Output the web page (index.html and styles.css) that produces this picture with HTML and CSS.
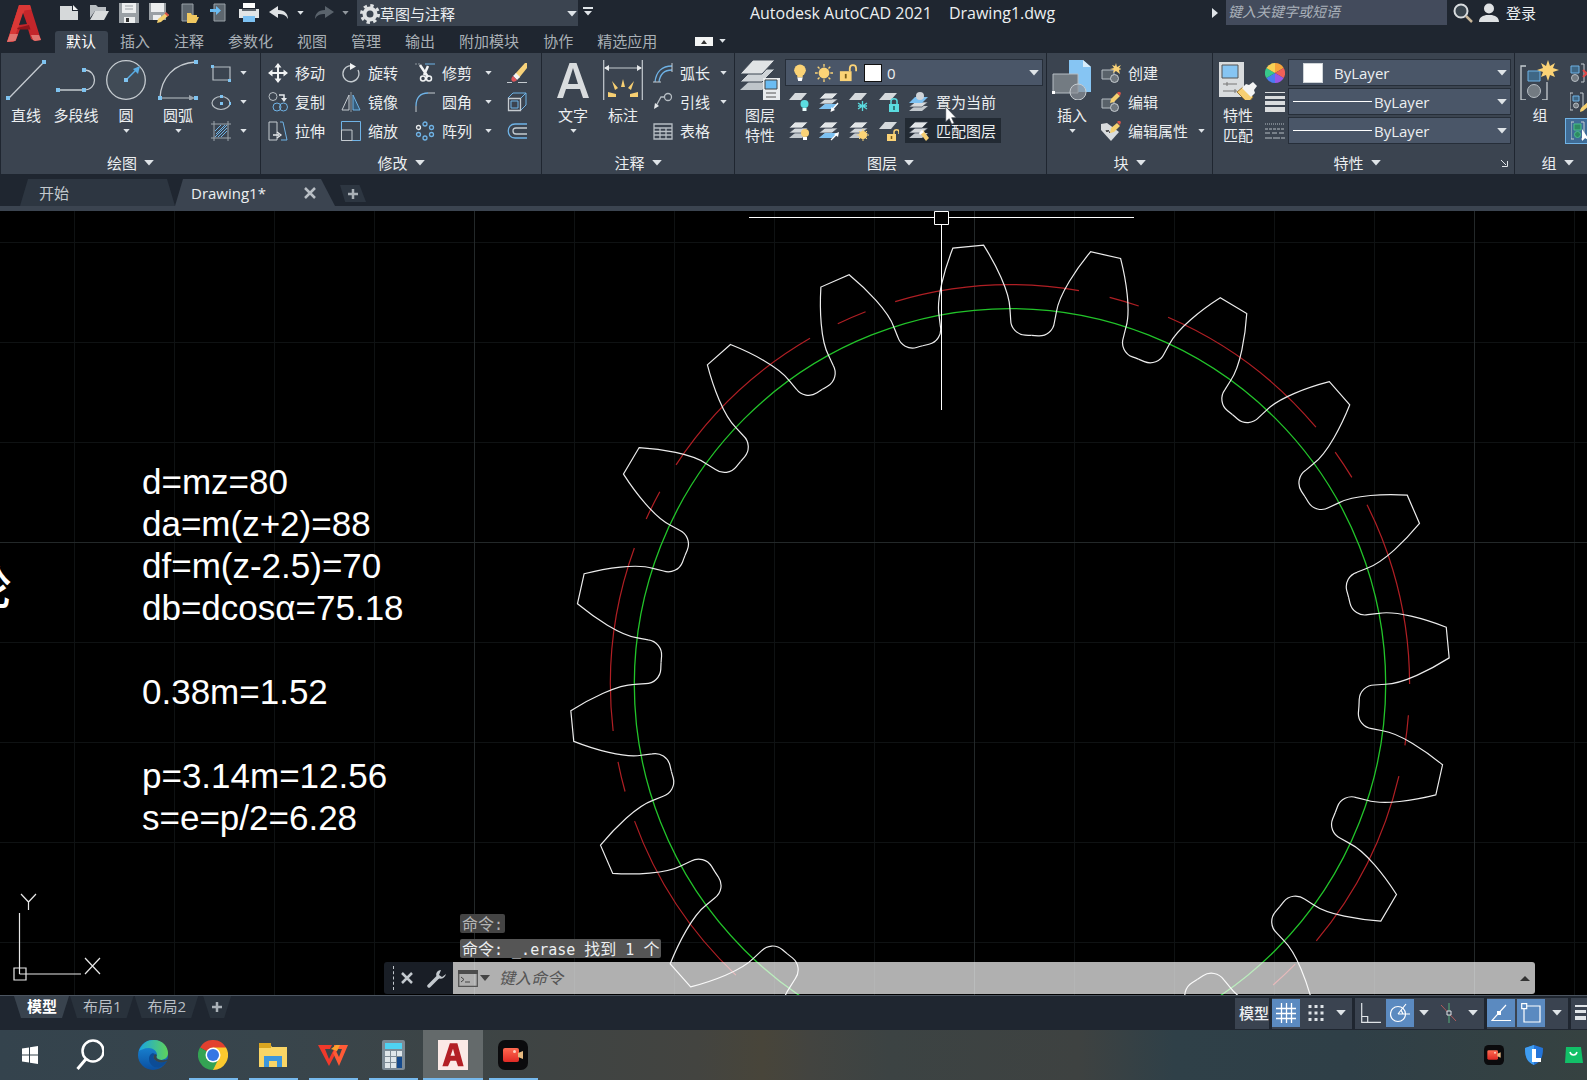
FILE: index.html
```html
<!DOCTYPE html>
<html lang="zh-CN">
<head>
<meta charset="utf-8">
<title>Autodesk AutoCAD 2021 - Drawing1.dwg</title>
<link rel="stylesheet" href="styles.css">
</head>
<body>
<svg class="symbols" width="0" height="0" aria-hidden="true">
  <defs>
    <linearGradient id="edge-a" x1="0" y1="0" x2="1" y2="0"><stop offset="0" stop-color="#1aa5e0"/><stop offset="1" stop-color="#5fd35a"/></linearGradient>
    <linearGradient id="edge-b" x1="0" y1="0" x2="0" y2="1"><stop offset="0" stop-color="#1b8fdd"/><stop offset="1" stop-color="#0b4fa0"/></linearGradient>
    <linearGradient id="rec" x1="0" y1="0" x2="0" y2="1"><stop offset="0" stop-color="#ff6a50"/><stop offset="1" stop-color="#e02a25"/></linearGradient>
    <symbol id="caret" viewBox="0 0 8 5"><path d="M0 0h8L4 4.6z" fill="#dfe4e8"/></symbol>
    <symbol id="logo" viewBox="0 0 34 38">
      <path d="M12 0h11l11 35-6 1-4-2-3-10h-8l-4 11-3 2H0z" fill="#c4262b"/>
      <path d="M12 0h11l1.500 4.500-7 1L9.500 27l-2 6L0 37z" fill="#d93836"/>
      <path d="M16 8l-4 12 8-1z" fill="#1f2630"/>
      <path d="M3 29h8l-2.500 7-8.500 1z" fill="#e0746f"/>
      <path d="M24 30l8 0 2 5-6 1-2-1z" fill="#e0746f"/>
      <path d="M10 23l12-3 1.500 4.500H11z" fill="#8f151b"/>
    </symbol>
    <symbol id="i-new" viewBox="0 0 20 20"><path d="M1 3h12v5h6v9H1z" fill="#d6d9da"/><path d="M14 2l5 5h-5z" fill="#f2f3f3"/></symbol>
    <symbol id="i-open" viewBox="0 0 20 20"><path d="M1 2h6l2 2h8v4H6L1 15z" fill="#b9bec2"/><path d="M6 8h14l-5 9H1z" fill="#d9dcdd"/></symbol>
    <symbol id="i-save" viewBox="0 0 20 20"><path d="M0 0h20v20H0z" fill="#9aa0a5"/><path d="M3 0h14v10H3zM5 14h11v6H5z" fill="#eceeef"/><path d="M6 3h8M6 6h8" stroke="#9aa0a5"/><path d="M7 15h3v4H7z" fill="#333"/></symbol>
    <symbol id="i-saveas" viewBox="0 0 20 20"><path d="M0 0h17v17H0z" fill="#9aa0a5"/><path d="M2 0h13v9H2zM4 12h8v5H4z" fill="#eceeef"/><path d="M8 20l1-4 8-6 3 2-8 7z" fill="#f5d06f"/><path d="M17 9l3 3-1.500 1.500-3-3z" fill="#d95448"/></symbol>
    <symbol id="i-webopen" viewBox="0 0 20 20"><path d="M3 1h11v17H3z" fill="#5d666e" stroke="#9aa1a7"/><path d="M8 10h4l1 2h5v2h2l-3 6H8z" fill="#f0c860"/></symbol>
    <symbol id="i-websave" viewBox="0 0 20 20"><path d="M5 1h11v17H5z" fill="#5d666e" stroke="#9aa1a7"/><path d="M1 6h6V3l5 4.500-5 4.500V9H1z" fill="#6bbcf2"/></symbol>
    <symbol id="i-print" viewBox="0 0 20 20"><path d="M4 0h12v5H4z" fill="#fff"/><path d="M0 6h20v9H0z" fill="#e2e5e6"/><path d="M4 13h12v6H4z" fill="#7cc1f2"/><path d="M3 7h14" stroke="#333b44" stroke-width="1.500"/></symbol>
    <symbol id="i-undo" viewBox="0 0 20 20"><path d="M0 9l9-6v4c7 0 10 4 10 9-2-4-5-5-10-5v4z" fill="#dfe2e4"/></symbol>
    <symbol id="i-redo" viewBox="0 0 20 20"><path d="M20 9l-9-6v4C4 7 1 11 1 16c2-4 5-5 10-5v4z" fill="#5a636c"/></symbol>
    <symbol id="i-gear" viewBox="0 0 20 20"><circle cx="10" cy="10" r="5.500" fill="none" stroke="#dfe2e4" stroke-width="4"/><circle cx="10" cy="10" r="8.500" fill="none" stroke="#dfe2e4" stroke-width="3" stroke-dasharray="3.340 3.340"/></symbol>
    <symbol id="i-search" viewBox="0 0 20 20"><circle cx="8" cy="8" r="6.500" fill="#39444d" stroke="#d7dbde" stroke-width="2"/><path d="M13 13l6 6" stroke="#c9b79a" stroke-width="2.500"/></symbol>
    <symbol id="i-user" viewBox="0 0 20 20"><circle cx="10" cy="5.500" r="5" fill="#dfe2e4"/><path d="M0 19c0-5 4-6 7-7h6c3 1 7 2 7 7z" fill="#dfe2e4"/></symbol>

    <symbol id="b-line" viewBox="0 0 40 40"><path d="M3 38L37 3" stroke="#c5cbd0" stroke-width="1.300"/><path d="M0 36h4v4H0zM36 0h4v4h-4z" fill="#7fc3f0"/></symbol>
    <symbol id="b-pline" viewBox="0 0 40 40"><path d="M2 30h26c14 0 14-20 0-20" fill="none" stroke="#c5cbd0" stroke-width="1.300"/><path d="M0 28h4v4H0zM26 28h4v4h-4zM26 8h4v4h-4z" fill="#7fc3f0"/></symbol>
    <symbol id="b-circle" viewBox="0 0 40 40"><circle cx="20" cy="20" r="19.300" fill="#414b56" stroke="#c5cbd0" stroke-width="1.300"/><path d="M20 20L32 8" stroke="#59aee6" stroke-width="1.500"/><path d="M34 6l-2 8-5-5z" fill="#59aee6"/><path d="M18 18h4v4h-4z" fill="#7fc3f0"/></symbol>
    <symbol id="b-arc" viewBox="0 0 40 40"><path d="M2 38C3 18 16 3 38 2" fill="none" stroke="#c5cbd0" stroke-width="1.300"/><path d="M2 38h32" stroke="#7b848c" stroke-width="2"/><path d="M31 35l6 3-6 3z" fill="#9aa2a9"/><path d="M0 36h4v4H0zM36 36h4v4h-4zM36 0h4v4h-4z" fill="#7fc3f0"/></symbol>
    <symbol id="s-rect" viewBox="0 0 20 20"><path d="M2 4h17v13H2z" fill="none" stroke="#b6bdc3" stroke-width="1.200"/><path d="M0 2h3v3H0zM17 16h3v3h-3z" fill="#7fc3f0"/></symbol>
    <symbol id="s-ellipse" viewBox="0 0 20 20"><ellipse cx="10" cy="11" rx="9" ry="6.500" fill="none" stroke="#b6bdc3" stroke-width="1.200"/><path d="M9 10h3v3H9zM9 3h3v3H9zM18 10h2v3h-2z" fill="#7fc3f0"/></symbol>
    <symbol id="s-hatch" viewBox="0 0 20 20"><path d="M3 0v20M17 0v20M0 3h20M0 17h20" stroke="#9ba3aa"/><path d="M4 10l6-6M4 16L16 4M10 16l6-6M5 13l9-9M7 16l9-9" stroke="#6fb3e6"/></symbol>
    <symbol id="s-move" viewBox="0 0 20 20"><path d="M10 1v18M1 10h18" stroke="#f1f3f4" stroke-width="2"/><path d="M10 0l3.500 4.500h-7zM10 20l3.500-4.500h-7zM0 10l4.500-3.500v7zM20 10l-4.500-3.500v7z" fill="#f1f3f4"/></symbol>
    <symbol id="s-copy" viewBox="0 0 20 20"><circle cx="5" cy="4.500" r="4" fill="none" stroke="#b6bdc3"/><path d="M11 3h5v4" fill="none" stroke="#e6e9eb" stroke-width="1.500"/><path d="M13 6h6l-3 4z" fill="#e6e9eb"/><circle cx="9" cy="15" r="4" fill="none" stroke="#6fb3e6"/><circle cx="15.500" cy="15" r="4" fill="none" stroke="#6fb3e6"/></symbol>
    <symbol id="s-stretch" viewBox="0 0 20 20"><path d="M1 1h8v18H1z" fill="none" stroke="#c5cbd0"/><path d="M12 1h3l4 18h-6" fill="none" stroke="#6fb3e6"/><path d="M5 14h6M9 11l4 3-4 3" fill="none" stroke="#e6e9eb" stroke-width="1.300"/></symbol>
    <symbol id="s-rotate" viewBox="0 0 20 20"><path d="M12 3A8 8 0 1 0 17 7" fill="none" stroke="#c5cbd0" stroke-width="1.300"/><path d="M9 0l6 3.500-6 3.500z" fill="#f1f3f4"/></symbol>
    <symbol id="s-mirror" viewBox="0 0 20 20"><path d="M8 3v15H1z" fill="none" stroke="#c5cbd0"/><path d="M12 3v15h7z" fill="#355a78" stroke="#6fb3e6"/><path d="M10 0v20" stroke="#8d959c"/></symbol>
    <symbol id="s-scale" viewBox="0 0 20 20"><path d="M.500 .500h19v19H.500z" fill="none" stroke="#6fb3e6"/><path d="M.500 9h10.500v10.500H.500z" fill="#3b4450" stroke="#c5cbd0"/></symbol>
    <symbol id="s-trim" viewBox="0 0 20 20"><path d="M0 1h6" stroke="#8d959c" stroke-dasharray="2 1"/><path d="M10 1h10" stroke="#6fb3e6"/><path d="M5 2l8 12M13 3L9 12" stroke="#f1f3f4" stroke-width="2.500"/><circle cx="8" cy="15.500" r="2.500" fill="none" stroke="#f1f3f4" stroke-width="1.500"/><circle cx="14" cy="15.500" r="2.500" fill="none" stroke="#f1f3f4" stroke-width="1.500"/></symbol>
    <symbol id="s-fillet" viewBox="0 0 20 20"><path d="M1 20v-6" stroke="#c5cbd0"/><path d="M1 14C1 6 5 1 13 1" fill="none" stroke="#6fb3e6" stroke-width="1.300"/><path d="M13 1h7" stroke="#c5cbd0"/></symbol>
    <symbol id="s-array" viewBox="0 0 20 20"><g fill="none" stroke="#6fb3e6" stroke-width="1.300"><circle cx="10" cy="3" r="2"/><circle cx="16.500" cy="6.500" r="2"/><circle cx="16.500" cy="13.500" r="2"/><circle cx="10" cy="17" r="2"/><circle cx="3.500" cy="13.500" r="2"/><circle cx="3.500" cy="6.500" r="2" stroke="#e6e9eb"/></g></symbol>
    <symbol id="s-erase" viewBox="0 0 20 20"><path d="M8 11L18 0h2v5l-8 10z" fill="#f7d27a"/><path d="M6 13l3-3 4 4-3 3z" fill="#f3f3f3"/><path d="M6 13l4 4c-2 2-4 2-5 1s-1-3 1-5z" fill="#e0565b"/><path d="M0 19.500h5M11 19.500h9" stroke="#c5cbd0"/></symbol>
    <symbol id="s-explode" viewBox="0 0 20 20"><path d="M1 6l5-5h13v12l-5 5" fill="none" stroke="#6fb3e6"/><path d="M1.500 6.500h12v12h-12z" fill="none" stroke="#c5cbd0" stroke-width="1.300"/><path d="M4 9h7v7H4zM14 6l5-5" fill="none" stroke="#6fb3e6"/></symbol>
    <symbol id="s-offset" viewBox="0 0 20 20"><path d="M20 3H8c-9 0-9 14 0 14h12" fill="none" stroke="#6fb3e6" stroke-width="1.300"/><path d="M20 7H9c-4 0-4 6 0 6h11" fill="none" stroke="#c5cbd0" stroke-width="1.300"/></symbol>
    <symbol id="b-text" viewBox="0 0 40 40"><path fill-rule="evenodd" d="M16.500 3h7L36 38h-6l-3-9H13l-3 9H4zM20 8l-5 16h10z" fill="#d9dcde"/></symbol>
    <symbol id="b-dim" viewBox="0 0 40 40"><path d="M.700 0v40M39.300 0v40M2 8h36" stroke="#c5cbd0" stroke-width="1.200"/><path d="M1 8l5-3v6zM39 8l-5-3v6z" fill="#e6e9eb"/><path d="M20 19l2 8h-4zM9 21l6 7-3 2zM31 21l-6 7 3 2zM5 32l8 2v3H5zM35 32l-8 2v3h8z" fill="#f7cf72"/></symbol>
    <symbol id="s-arclen" viewBox="0 0 20 20"><path d="M2 19C3 9 9 3 19 3M6 19C7 11 12 7 19 7" fill="none" stroke="#6fb3e6" stroke-width="1.300"/><path d="M0 19h8M19 0v9" stroke="#c5cbd0"/></symbol>
    <symbol id="s-leader" viewBox="0 0 20 20"><circle cx="15" cy="5" r="3.500" fill="none" stroke="#b6bdc3" stroke-width="1.300"/><path d="M11 5H8L3 14" fill="none" stroke="#b6bdc3" stroke-width="1.300"/><path d="M1 17l1-6 4 3z" fill="#e6e9eb"/></symbol>
    <symbol id="s-table" viewBox="0 0 20 20"><path d="M1 3h18v15H1zM1 7h18M1 10.500h18M1 14h18M7 7v11M13 7v11" fill="none" stroke="#b6bdc3" stroke-width="1.300"/></symbol>

    <symbol id="sheets" viewBox="0 0 20 20"><path d="M6 12h13l-6 5H0z" fill="#c3c9ce"/><path d="M6 7h13l-6 5H0z" fill="#d5d9dc" stroke="#3b4450" stroke-width=".700"/><path d="M6 1h13l-6 6H0z" fill="#e2e5e7" stroke="#3b4450" stroke-width=".700"/></symbol>
    <symbol id="sheet" viewBox="0 0 20 20"><path d="M6 1h12l-6 7H0z" fill="#d5d9dc"/></symbol>
    <symbol id="b-layer" viewBox="0 0 40 40"><path d="M13 18h22L22 30H0z" fill="#bfc5ca"/><path d="M13 9h22L22 22H0z" fill="#cfd4d8" stroke="#3b4450"/><path d="M13 0h22L22 14H0z" fill="#e0e3e5" stroke="#3b4450"/><path d="M23 18h17v22H23z" fill="#e8ebed"/><path d="M25 20h12v9H25z" fill="#6bbcf2" stroke="#444"/><path d="M26 33h10M26 37h10" stroke="#555"/></symbol>
    <symbol id="s-bulb" viewBox="0 0 20 20"><circle cx="10" cy="7" r="6.500" fill="#fbd376"/><path d="M7 12h6v3H7z" fill="#fbd376"/><path d="M7 15h6l-1 4H8z" fill="#fff"/></symbol>
    <symbol id="s-sun" viewBox="0 0 20 20"><circle cx="10" cy="10" r="6" fill="#fbd376"/><path d="M10 0v3M10 17v3M0 10h3M17 10h3M3 3l2 2M15 15l2 2M17 3l-2 2M5 15l-2 2" stroke="#fbd376" stroke-width="1.500"/></symbol>
    <symbol id="s-unlock" viewBox="0 0 20 20"><path d="M1 8h13v11H1z" fill="#fbd376"/><path d="M12 8V5c0-5 7-5 7 0v3" fill="none" stroke="#fbd376" stroke-width="2"/><path d="M7.500 11v5" stroke="#7a5b17" stroke-width="2"/></symbol>
    <symbol id="l-off" viewBox="0 0 20 20"><use href="#sheet"/><circle cx="15.500" cy="12" r="4" fill="#5bdce0"/><path d="M13.500 16h4v3h-4z" fill="#e9fbfb"/></symbol>
    <symbol id="l-iso" viewBox="0 0 20 20"><use href="#sheets"/><path d="M6 12h13l-6 5H0z" fill="#7cc1f2"/><path d="M19 11l-6 7" stroke="#fff" stroke-width="1.300"/><path d="M11.500 20l1-5 3.500 3z" fill="#fff"/></symbol>
    <symbol id="l-freeze" viewBox="0 0 20 20"><use href="#sheet"/><path d="M13.500 9v10M9 11l9 6M18 11l-9 6M9 14h9" stroke="#5bdce0" stroke-width="1.300"/></symbol>
    <symbol id="l-lock" viewBox="0 0 20 20"><use href="#sheet"/><path d="M10 12h10v8H10z" fill="#5bdce0"/><path d="M12 12V9c0-3 6-3 6 0v3" fill="none" stroke="#5bdce0" stroke-width="1.500"/><path d="M15 14v4" stroke="#1f5a5c" stroke-width="1.500"/></symbol>
    <symbol id="l-current" viewBox="0 0 20 20"><path d="M6 14h13l-6 5H0z" fill="#c3c9ce"/><path d="M6 10h13l-6 5H0z" fill="#d5d9dc" stroke="#3b4450" stroke-width=".700"/><path d="M6 5h13l-6 6H0z" fill="#7cc1f2"/><circle cx="11" cy="4" r="4" fill="#cfd4d8"/></symbol>
    <symbol id="l-on" viewBox="0 0 20 20"><use href="#sheets"/><circle cx="16" cy="12" r="4" fill="#fbd376"/><path d="M14 16h4v3h-4z" fill="#fff"/></symbol>
    <symbol id="l-uniso" viewBox="0 0 20 20"><use href="#sheets"/><path d="M6 12h13l-6 5H0z" fill="#7cc1f2"/><path d="M12 19l6-6" stroke="#fff" stroke-width="1.300"/><path d="M20 11l-1 5-4-3z" fill="#fff"/></symbol>
    <symbol id="l-thaw" viewBox="0 0 20 20"><use href="#sheets"/><circle cx="14" cy="14" r="4" fill="#fbd376"/><path d="M14 8v12M8 14h12M10 10l8 8M18 10l-8 8" stroke="#fbd376"/></symbol>
    <symbol id="l-unlock" viewBox="0 0 20 20"><use href="#sheet"/><path d="M8 13h9v7H8z" fill="#fbd376"/><path d="M15 13v-2c0-3 5-3 5 0v2" fill="none" stroke="#fbd376" stroke-width="1.500"/><path d="M12.500 15v3" stroke="#7a5b17" stroke-width="1.500"/></symbol>
    <symbol id="l-match" viewBox="0 0 20 20"><use href="#sheets"/><path d="M11 12l3-3 6 8-3 3z" fill="#f7cf72"/><path d="M10 12l3-3 2 2-4 3z" fill="#fff"/></symbol>

    <symbol id="b-insert" viewBox="0 0 40 40"><path d="M17 0h14l8 7v25H17z" fill="#86c5f3"/><path d="M31 0v7h8z" fill="#d8edfb"/><path d="M1 14h25v19H1z" fill="#737b82" stroke="#b6bdc3"/><circle cx="26" cy="32" r="8" fill="#8b9298" fill-opacity=".700" stroke="#c5cbd0"/><path d="M0 31h3v3H0z" fill="#fff"/></symbol>
    <symbol id="s-block" viewBox="0 0 20 20"><path d="M1 7h12v9H1z" fill="#59626a" stroke="#b6bdc3"/><circle cx="13.500" cy="15.500" r="4" fill="#6f777e" stroke="#c5cbd0"/></symbol>
    <symbol id="s-create" viewBox="0 0 20 20"><use href="#s-block"/><path d="M15 0l1 4 4-2-2 3 3 1-3 1 1 4-4-3-3 2 1-3-4-1 4-1-2-3 3 1z" fill="#fbd376"/></symbol>
    <symbol id="s-edit" viewBox="0 0 20 20"><use href="#s-block"/><path d="M9 11l1-4 6-6 3 3-6 6z" fill="#f5d06f"/><path d="M16 1l3 3 1-3-2-2z" fill="#d95448"/></symbol>
    <symbol id="s-attr" viewBox="0 0 20 20"><path d="M0 3l6-1 12 9-8 9L0 9z" fill="#d9dcde"/><path d="M5 9l1 2 1-2 2 3" stroke="#333" fill="none"/><path d="M9 12l1-5 6-5 3 3-6 6z" fill="#f5d06f"/><path d="M16 1l3 3 1-3-2-2z" fill="#d95448"/></symbol>
    <symbol id="b-match" viewBox="0 0 40 40"><path d="M1 2h25v35H1z" fill="#d9dcde"/><path d="M4 5h16v13H4z" fill="#86c5f3" stroke="#555"/><path d="M5 24h14M5 31h14M9 22v4M17 29v4" stroke="#777"/><path d="M19 32l6-5 10 10-5 6z" fill="#f7cf72" stroke="#9b7a35"/><path d="M24 28l4-4 3 1 4-3 4 4-3 4 1 3-4 4z" fill="#f3f4f4"/></symbol>
    <symbol id="s-wheel" viewBox="-10 -10 20 20"><path d="M0 0V-10A10 10 0 0 1 8.700-5z" fill="#f6a33b"/><path d="M0 0L8.700-5A10 10 0 0 1 8.700 5z" fill="#f06058"/><path d="M0 0L8.700 5A10 10 0 0 1 0 10z" fill="#9857e6"/><path d="M0 0V10A10 10 0 0 1-8.700 5z" fill="#4a7cf0"/><path d="M0 0L-8.700 5A10 10 0 0 1-8.700-5z" fill="#38c98b"/><path d="M0 0L-8.700-5A10 10 0 0 1 0-10z" fill="#f7d154"/></symbol>
    <symbol id="s-weight" viewBox="0 0 20 20"><path d="M0 0h20v1H0zM0 4h20v3H0zM0 9h20v4H0zM0 15h20v5H0z" fill="#d9dcde"/></symbol>
    <symbol id="s-ltype" viewBox="0 0 20 20"><path d="M0 3h20" stroke="#b6bdc3" stroke-dasharray="1 1"/><path d="M0 8h20" stroke="#b6bdc3" stroke-dasharray="3 1"/><path d="M0 12h20" stroke="#b6bdc3" stroke-dasharray="5 2"/><path d="M0 17h20" stroke="#b6bdc3" stroke-dasharray="7 1"/></symbol>
    <symbol id="b-group" viewBox="0 0 40 40"><path d="M6 6H1v34h5M22 40h5V22" fill="none" stroke="#c5cbd0" stroke-width="1.300"/><path d="M8 11h12v10H8z" fill="#3f6785" stroke="#6fb3e6"/><circle cx="14" cy="31" r="6.500" fill="#737b82" stroke="#b6bdc3"/><path d="M28 0l2 6 5-3-2 5 6 2-6 2 2 5-5-2-2 6-2-6-5 2 2-5-6-2 6-2-2-5 5 3z" fill="#fbd376"/></symbol>
    <symbol id="s-ungroup" viewBox="0 0 20 20"><path d="M1 3h8v7H1z" fill="#3f6785" stroke="#6fb3e6"/><circle cx="5" cy="15" r="3.500" fill="#737b82" stroke="#b6bdc3"/><path d="M11 1h3v18h-3" fill="none" stroke="#c5cbd0"/><path d="M13 7l7 7M20 7l-7 7" stroke="#e04a4a" stroke-width="2"/></symbol>
    <symbol id="s-gedit" viewBox="0 0 20 20"><path d="M3 1H0v17h3M10 1h3v17h-3" fill="none" stroke="#c5cbd0"/><path d="M3 4h6v5H3z" fill="#3f6785" stroke="#6fb3e6"/><circle cx="6" cy="13.500" r="2.500" fill="#737b82" stroke="#b6bdc3"/><path d="M10 20l1-4 7-6 2 3-7 6z" fill="#f5d06f"/></symbol>
    <symbol id="s-gsel" viewBox="0 0 20 20"><path d="M3 1H0v17h3M10 1h3v17h-3" fill="none" stroke="#c5cbd0"/><path d="M3 3h7v6H3z" fill="#2f8a63" stroke="#49c08c"/><circle cx="6.500" cy="13.500" r="3" fill="#2f8a63" stroke="#49c08c"/><path d="M11 8v12l3-3 5 3z" fill="#fff"/></symbol>
    <symbol id="pointer" viewBox="0 0 12 19"><path d="M.700 .700v15l3.500-3 2.500 5.500 2.500-1-2.500-5.500h4.500z" fill="#fff" stroke="#3a424c" stroke-width=".700"/></symbol>
    <symbol id="rec-icon" viewBox="0 0 30 30"><rect width="30" height="30" rx="7" fill="#0b0b0d"/><rect x="5" y="8" width="16" height="14" rx="2" fill="url(#rec)"/><path d="M20 13l5-2v8l-5-2z" fill="#e6b980"/><circle cx="16.500" cy="11.500" r="1.500" fill="#ffd0c0"/></symbol>
  </defs>
</svg>

<header class="titlebar">
  <button class="app-menu" aria-label="应用程序菜单"><svg width="34" height="38"><use href="#logo"/></svg></button>
  <div class="title-rows">
    <div class="title-row">
      <div class="quick-access">
        <button aria-label="新建"><svg class="ico"><use href="#i-new"/></svg></button>
        <button aria-label="打开"><svg class="ico"><use href="#i-open"/></svg></button>
        <button aria-label="保存"><svg class="ico"><use href="#i-save"/></svg></button>
        <button aria-label="另存为"><svg class="ico"><use href="#i-saveas"/></svg></button>
        <button aria-label="从 Web 打开"><svg class="ico"><use href="#i-webopen"/></svg></button>
        <button aria-label="保存到 Web"><svg class="ico"><use href="#i-websave"/></svg></button>
        <button aria-label="打印"><svg class="ico"><use href="#i-print"/></svg></button>
        <button class="with-caret" aria-label="放弃"><svg class="ico"><use href="#i-undo"/></svg><svg class="tiny"><use href="#caret"/></svg></button>
        <button class="with-caret" aria-label="重做"><svg class="ico"><use href="#i-redo"/></svg><svg class="tiny dim"><use href="#caret"/></svg></button>
      </div>
      <label class="workspace"><svg class="ico"><use href="#i-gear"/></svg><select aria-label="工作空间"><option>草图与注释</option></select><svg class="caret"><use href="#caret"/></svg></label>
      <button class="customize" aria-label="自定义快速访问工具栏"><svg width="10" height="9"><path d="M0 0h10v2H0zM1 4h8L5 8.600z" fill="#dfe4e8"/></svg></button>
      <h1 class="title"><span>Autodesk AutoCAD 2021</span><span>Drawing1.dwg</span></h1>
      <div class="infocenter">
        <svg width="6" height="10"><path d="M0 0v10l6-5z" fill="#dfe4e8"/></svg>
        <input class="search" type="text" placeholder="键入关键字或短语" aria-label="搜索">
        <button aria-label="搜索"><svg class="ico"><use href="#i-search"/></svg></button>
        <button class="signin"><svg class="ico"><use href="#i-user"/></svg>登录</button>
      </div>
    </div>
    <nav class="ribbon-tabs">
      <button class="active">默认</button><button>插入</button><button>注释</button><button>参数化</button><button>视图</button><button>管理</button><button>输出</button><button>附加模块</button><button>协作</button><button>精选应用</button>
      <button class="minimize" aria-label="最小化功能区"><svg width="18" height="9"><path d="M0 0h18v9H0z" fill="#f3f4f4"/><path d="M6 7h6L9 3z" fill="#333"/></svg><svg class="tiny"><use href="#caret"/></svg></button>
    </nav>
  </div>
</header>

<main class="ribbon">
  <section class="panel p-draw">
    <div class="panel-body">
      <button class="big"><svg class="bigico"><use href="#b-line"/></svg>直线</button>
      <button class="big"><svg class="bigico"><use href="#b-pline"/></svg>多段线</button>
      <button class="big"><svg class="bigico"><use href="#b-circle"/></svg>圆<svg class="tiny"><use href="#caret"/></svg></button>
      <button class="big wide"><svg class="bigico"><use href="#b-arc"/></svg>圆弧<svg class="tiny"><use href="#caret"/></svg></button>
      <div class="rows">
        <button class="cmd split" aria-label="矩形"><svg class="ico"><use href="#s-rect"/></svg><svg class="tiny"><use href="#caret"/></svg></button>
        <button class="cmd split" aria-label="椭圆"><svg class="ico"><use href="#s-ellipse"/></svg><svg class="tiny"><use href="#caret"/></svg></button>
        <button class="cmd split" aria-label="图案填充"><svg class="ico"><use href="#s-hatch"/></svg><svg class="tiny"><use href="#caret"/></svg></button>
      </div>
    </div>
    <button class="panel-title">绘图<svg class="caret"><use href="#caret"/></svg></button>
  </section>

  <section class="panel p-modify">
    <div class="panel-body">
      <div class="rows">
        <button class="cmd"><svg class="ico"><use href="#s-move"/></svg>移动</button>
        <button class="cmd"><svg class="ico"><use href="#s-rotate"/></svg>旋转</button>
        <button class="cmd split"><svg class="ico"><use href="#s-trim"/></svg>修剪<svg class="tiny"><use href="#caret"/></svg></button>
        <button class="cmd" aria-label="删除"><svg class="ico"><use href="#s-erase"/></svg></button>
        <button class="cmd"><svg class="ico"><use href="#s-copy"/></svg>复制</button>
        <button class="cmd"><svg class="ico"><use href="#s-mirror"/></svg>镜像</button>
        <button class="cmd split"><svg class="ico"><use href="#s-fillet"/></svg>圆角<svg class="tiny"><use href="#caret"/></svg></button>
        <button class="cmd" aria-label="分解"><svg class="ico"><use href="#s-explode"/></svg></button>
        <button class="cmd"><svg class="ico"><use href="#s-stretch"/></svg>拉伸</button>
        <button class="cmd"><svg class="ico"><use href="#s-scale"/></svg>缩放</button>
        <button class="cmd split"><svg class="ico"><use href="#s-array"/></svg>阵列<svg class="tiny"><use href="#caret"/></svg></button>
        <button class="cmd" aria-label="偏移"><svg class="ico"><use href="#s-offset"/></svg></button>
      </div>
    </div>
    <button class="panel-title">修改<svg class="caret"><use href="#caret"/></svg></button>
  </section>

  <section class="panel p-annotate">
    <div class="panel-body">
      <button class="big"><svg class="bigico"><use href="#b-text"/></svg>文字<svg class="tiny"><use href="#caret"/></svg></button>
      <button class="big"><svg class="bigico"><use href="#b-dim"/></svg>标注</button>
      <div class="rows">
        <button class="cmd split"><svg class="ico"><use href="#s-arclen"/></svg>弧长<svg class="tiny"><use href="#caret"/></svg></button>
        <button class="cmd split"><svg class="ico"><use href="#s-leader"/></svg>引线<svg class="tiny"><use href="#caret"/></svg></button>
        <button class="cmd"><svg class="ico"><use href="#s-table"/></svg>表格</button>
      </div>
    </div>
    <button class="panel-title">注释<svg class="caret"><use href="#caret"/></svg></button>
  </section>

  <section class="panel p-layer">
    <div class="panel-body">
      <button class="big"><svg class="bigico"><use href="#b-layer"/></svg>图层<br>特性</button>
      <div class="rows">
        <label class="combo layer-combo"><svg class="ico"><use href="#s-bulb"/></svg><svg class="ico"><use href="#s-sun"/></svg><svg class="ico"><use href="#s-unlock"/></svg><span class="swatch"></span><select aria-label="图层"><option>0</option></select><svg class="caret"><use href="#caret"/></svg></label>
        <button class="cmd" aria-label="关"><svg class="ico"><use href="#l-off"/></svg></button>
        <button class="cmd" aria-label="隔离"><svg class="ico"><use href="#l-iso"/></svg></button>
        <button class="cmd" aria-label="冻结"><svg class="ico"><use href="#l-freeze"/></svg></button>
        <button class="cmd" aria-label="锁定"><svg class="ico"><use href="#l-lock"/></svg></button>
        <button class="cmd pad pointed"><svg class="ico"><use href="#l-current"/></svg>置为当前<svg class="pointer"><use href="#pointer"/></svg></button>
        <button class="cmd" aria-label="打开所有图层"><svg class="ico"><use href="#l-on"/></svg></button>
        <button class="cmd" aria-label="取消隔离"><svg class="ico"><use href="#l-uniso"/></svg></button>
        <button class="cmd" aria-label="解冻所有图层"><svg class="ico"><use href="#l-thaw"/></svg></button>
        <button class="cmd" aria-label="解锁"><svg class="ico"><use href="#l-unlock"/></svg></button>
        <button class="cmd pad hover"><svg class="ico"><use href="#l-match"/></svg>匹配图层</button>
      </div>
    </div>
    <button class="panel-title">图层<svg class="caret"><use href="#caret"/></svg></button>
  </section>

  <section class="panel p-block">
    <div class="panel-body">
      <button class="big"><svg class="bigico"><use href="#b-insert"/></svg>插入<svg class="tiny"><use href="#caret"/></svg></button>
      <div class="rows">
        <button class="cmd"><svg class="ico"><use href="#s-create"/></svg>创建</button>
        <button class="cmd"><svg class="ico"><use href="#s-edit"/></svg>编辑</button>
        <button class="cmd split"><svg class="ico"><use href="#s-attr"/></svg>编辑属性<svg class="tiny"><use href="#caret"/></svg></button>
      </div>
    </div>
    <button class="panel-title">块<svg class="caret"><use href="#caret"/></svg></button>
  </section>

  <section class="panel p-props">
    <div class="panel-body">
      <button class="big"><svg class="bigico"><use href="#b-match"/></svg>特性<br>匹配</button>
      <div class="rows">
        <svg class="ico"><use href="#s-wheel"/></svg>
        <label class="combo"><span class="swatch large"></span><select aria-label="对象颜色"><option>ByLayer</option></select><svg class="caret"><use href="#caret"/></svg></label>
        <svg class="ico"><use href="#s-weight"/></svg>
        <label class="combo line"><span class="stroke"></span><select aria-label="线宽"><option>ByLayer</option></select><svg class="caret"><use href="#caret"/></svg></label>
        <svg class="ico"><use href="#s-ltype"/></svg>
        <label class="combo line"><span class="stroke"></span><select aria-label="线型"><option>ByLayer</option></select><svg class="caret"><use href="#caret"/></svg></label>
      </div>
    </div>
    <div class="panel-foot">
      <button class="panel-title">特性<svg class="caret"><use href="#caret"/></svg></button>
      <button class="launcher" aria-label="特性设置"><svg width="7" height="7"><path d="M0 0l5 5M6.500 1v5.500H1" fill="none" stroke="#dfe4e8"/></svg></button>
    </div>
  </section>

  <section class="panel p-group">
    <div class="panel-body">
      <button class="big"><svg class="bigico"><use href="#b-group"/></svg>组</button>
      <div class="rows">
        <button class="cmd" aria-label="解除编组"><svg class="ico"><use href="#s-ungroup"/></svg></button>
        <button class="cmd" aria-label="组编辑"><svg class="ico"><use href="#s-gedit"/></svg></button>
        <button class="cmd on" aria-label="启用组选择"><svg class="ico"><use href="#s-gsel"/></svg></button>
      </div>
    </div>
    <button class="panel-title">组<svg class="caret"><use href="#caret"/></svg></button>
  </section>
</main>

<nav class="doc-tabs">
  <button class="doc-tab">开始</button>
  <button class="doc-tab active">Drawing1*<svg width="12" height="12"><path d="M1 1l10 10M11 1L1 11" stroke="#b9bfc5" stroke-width="2.500"/></svg></button>
  <button class="add-tab" aria-label="新图形"><svg width="10" height="10"><path d="M5 0v10M0 5h10" stroke="#a9b0b6" stroke-width="2.500"/></svg></button>
</nav>

<section class="canvas">
  <svg class="drawing" width="100%" height="100%">
    <defs>
      <pattern id="minor" x="74" y="31" width="100" height="100" patternUnits="userSpaceOnUse"><path d="M.500 0v100M0 .500h100" stroke="#0f1213"/></pattern>
      <pattern id="major" x="474" y="331" width="500" height="500" patternUnits="userSpaceOnUse"><path d="M.500 0v500M0 .500h500" stroke="#232829"/></pattern>
      <path id="tooth" d="M-54.700-345.300A349.600 349.600 0 0 1-48.300-346.200A15.200 15.200 0 0 0-35.300-362.800L-35.600-373.800C-36.900-391-25.400-420-15.400-439.700L15.400-439.700C25.400-420 36.900-391 35.600-373.800L35.300-362.800A15.200 15.200 0 0 0 48.300-346.200A349.600 349.600 0 0 1 54.700-345.300"/>
    </defs>
    <rect width="100%" height="100%" fill="url(#minor)"/>
    <rect width="100%" height="100%" fill="url(#major)"/>
    <g transform="translate(1010 473.300)" fill="none">
      <circle r="399.600" stroke="#b01f24" stroke-width="1.200" pathLength="360" stroke-dasharray="26.650 4.500 4.350 4.500" transform="rotate(-106.700)"/>
      <circle r="375.700" stroke="#22c32a" stroke-width="1.300"/>
      <g stroke="#ececec" stroke-width="1.200" transform="rotate(-5.450)">
        <use href="#tooth"/>
        <use href="#tooth" transform="rotate(18)"/>
        <use href="#tooth" transform="rotate(36)"/>
        <use href="#tooth" transform="rotate(54)"/>
        <use href="#tooth" transform="rotate(72)"/>
        <use href="#tooth" transform="rotate(90)"/>
        <use href="#tooth" transform="rotate(108)"/>
        <use href="#tooth" transform="rotate(126)"/>
        <use href="#tooth" transform="rotate(144)"/>
        <use href="#tooth" transform="rotate(162)"/>
        <use href="#tooth" transform="rotate(180)"/>
        <use href="#tooth" transform="rotate(198)"/>
        <use href="#tooth" transform="rotate(216)"/>
        <use href="#tooth" transform="rotate(234)"/>
        <use href="#tooth" transform="rotate(252)"/>
        <use href="#tooth" transform="rotate(270)"/>
        <use href="#tooth" transform="rotate(288)"/>
        <use href="#tooth" transform="rotate(306)"/>
        <use href="#tooth" transform="rotate(324)"/>
        <use href="#tooth" transform="rotate(342)"/>
      </g>
    </g>
    <path d="M749 6.500h186M948 6.500h186M941.500 14v185" stroke="#fff"/>
    <path d="M934.500 .500h14v13h-14z" fill="none" stroke="#fff"/>
    <g stroke="#e8e8e8" fill="none" stroke-width="1.200">
      <path d="M19.500 763V702M19.500 763H81M14 757h12v12H14z"/>
      <path d="M21 683l7.500 8 7.500-8M28.500 691v8M85 747l15 16M100 747l-15 16"/>
    </g>
  </svg>
  <div class="note clipped">轮</div>
  <pre class="note formulas">d=mz=80
da=m(z+2)=88
df=m(z-2.5)=70
db=dcosα=75.18

0.38m=1.52

p=3.14m=12.56
s=e=p/2=6.28</pre>
  <div class="console">
    <div class="history old">命令<code>:</code></div>
    <div class="history">命令<code>: _.erase </code>找到<code> 1 </code>个</div>
    <div class="command-bar">
      <div class="command-tools">
        <span class="grip"></span>
        <button aria-label="关闭"><svg width="12" height="12"><path d="M1 1l10 10M11 1L1 11" stroke="#c3c9ce" stroke-width="2.500"/></svg></button>
        <button aria-label="自定义"><svg width="20" height="20"><path d="M2 18l9-9" stroke="#c3c9ce" stroke-width="3.500" stroke-linecap="round"/><path d="M14 2c-4 0-6 4-4 7 2 3 8 2 9-3l-4 3-3-2z" fill="#c3c9ce"/></svg></button>
      </div>
      <label class="command-line">
        <svg width="20" height="17"><path d="M.700 .700h18.600v15.600H.700z" fill="none" stroke="#555" stroke-width="1.300"/><path d="M0 0h20v4H0z" fill="#4c4c4c"/><path d="M3 7l3 2.500L3 12M7 12h5" fill="none" stroke="#444"/></svg>
        <svg width="10" height="6"><path d="M0 0h10L5 6z" fill="#444"/></svg>
        <input type="text" placeholder="键入命令" aria-label="命令行">
        <svg width="10" height="5"><path d="M0 5h10L5 0z" fill="#333"/></svg>
      </label>
    </div>
  </div>
</section>

<footer class="statusbar">
  <nav class="layout-tabs">
    <button class="active">模型</button><button>布局1</button><button>布局2</button><button class="plus" aria-label="新建布局"><svg width="10" height="10"><path d="M5 0v10M0 5h10" stroke="#a9b0b6" stroke-width="2.500"/></svg></button>
  </nav>
  <div class="status-tools">
    <button class="model">模型</button>
    <div class="tool-group">
      <button class="tool on" aria-label="栅格"><svg width="20" height="20"><path d="M5.500 0v20M10.500 0v20M15.500 0v20M0 5.500h20M0 10.500h20M0 15.500h20" stroke="#fff" stroke-width="1.300"/></svg></button>
      <button class="tool wide" aria-label="捕捉"><svg width="16" height="16"><path d="M2 0v16M8 0v16M14 0v16" stroke="#dfe4e8" stroke-width="3" stroke-dasharray="3 3.500"/></svg></button>
      <button class="drop" aria-label="捕捉选项"><svg class="caret"><use href="#caret"/></svg></button>
    </div>
    <div class="tool-group">
      <button class="tool wide" aria-label="正交"><svg width="20" height="20"><path d="M.700 0v19.300H20M.700 13.500h6v6" fill="none" stroke="#dfe4e8" stroke-width="1.200"/></svg></button>
      <button class="tool on" aria-label="极轴追踪"><svg width="20" height="20"><circle cx="8" cy="11" r="7.500" fill="none" stroke="#fff" stroke-width="1.200"/><path d="M8 11h12M8 11l8-10M13 11l-2-4" fill="none" stroke="#fff" stroke-width="1.200"/></svg></button>
      <button class="drop" aria-label="极轴选项"><svg class="caret"><use href="#caret"/></svg></button>
      <button class="tool" aria-label="等轴测草图"><svg width="18" height="20"><path d="M9 0v20" stroke="#55b07b"/><path d="M1 2l15 16" stroke="#b05c5c"/><path d="M7 8h4v4H7z" fill="#3a4350" stroke="#dfe4e8"/></svg></button>
      <button class="drop" aria-label="等轴测选项"><svg class="caret"><use href="#caret"/></svg></button>
    </div>
    <div class="tool-group spaced">
      <button class="tool on" aria-label="对象捕捉追踪"><svg width="20" height="20"><path d="M15 2L1 17.500h19" fill="none" stroke="#fff" stroke-width="1.200"/><path d="M6 8h4v4H6z" fill="#fff"/></svg></button>
      <button class="tool on" aria-label="对象捕捉"><svg width="20" height="20"><path d="M6 3h13v16H3V6" fill="none" stroke="#fff" stroke-width="1.200"/><path d="M.700 .700h5v5h-5z" fill="none" stroke="#fff" stroke-width="1.200"/></svg></button>
      <button class="drop" aria-label="对象捕捉选项"><svg class="caret"><use href="#caret"/></svg></button>
    </div>
    <div class="tool-group">
      <button class="tool" aria-label="线宽"><svg width="20" height="18"><path d="M0 1h20v2H0zM0 6h11v3H0zM0 12h11v4H0zM13 7h7v2h-7zM13 12h7v4h-7z" fill="#dfe4e8"/></svg></button>
    </div>
  </div>
</footer>

<div class="taskbar">
  <div class="apps">
    <button class="start" aria-label="开始"><svg width="16" height="18"><path d="M0 2.500l7-1v7H0zM8 1.300L16 0v8.500H8zM0 9.500h7v7l-7-1zM8 9.500h8V18l-8-1.300z" fill="#fff"/></svg></button>
    <button class="find" aria-label="搜索"><svg width="28" height="32"><circle cx="17" cy="12" r="10.500" fill="none" stroke="#fff" stroke-width="2.500"/><path d="M10 20L1.500 30" stroke="#fff" stroke-width="3"/></svg></button>
    <button class="app" aria-label="Edge"><svg width="30" height="30"><circle cx="15" cy="15" r="15" fill="url(#edge-b)"/><path d="M1 11C4 3 10 0 16 0c9 0 14 7 14 13 0 5-4 7-8 7-4-1-4-2-3-5 0-4-4-7-8-7-5 0-8 2-10 3z" fill="url(#edge-a)"/><path d="M29 21c-4 2-9 2-12-1-2-2-2-4 0-6-3-2-6 1-6 5 0 6 6 10 11 8 3-1 6-4 7-6z" fill="#0c4c96"/><path d="M17 14c-2 2-2 4 0 6 3 3 8 3 12 1l1-2c-4 2-8 1-10 0-2-1-2-3-1-4z" fill="#36454d"/></svg></button>
    <button class="app running" aria-label="Chrome"><svg width="30" height="30"><path d="M15 15L2 7.500A15 15 0 0 1 28 7.500z" fill="#e2402f"/><path d="M15 15V7.500h13A15 15 0 0 1 15 30z" fill="#fbc92e"/><path d="M2 7.500L21 18l-6 12A15 15 0 0 1 2 7.500z" fill="#34a353"/><circle cx="15" cy="15" r="7.500" fill="#fff"/><circle cx="15" cy="15" r="6" fill="#3576e4"/></svg></button>
    <button class="app running" aria-label="文件资源管理器"><svg width="28" height="26"><path d="M0 2h11l2 3h15v20H0z" fill="#f9d565"/><path d="M0 1h12v5H0z" fill="#d9a520"/><path d="M5 25V14h18v11h-5v-6h-8v6z" fill="#3d96dc"/></svg></button>
    <button class="app running" aria-label="WPS"><svg width="30" height="22"><path d="M0 1h14l-2 4H7l4 10 7-14h4L11 22z" fill="#f0392b"/><path d="M16 1h14L21 22l-6-13 2-4 4 8 3-8h-8z" fill="#ff5a36"/><path d="M13 5l5-4h4l-3 6z" fill="#fba22e"/></svg></button>
    <button class="app running" aria-label="计算器"><svg width="23" height="30"><rect width="23" height="30" rx="2" fill="#7d8b96"/><path d="M3 3h17v6H3z" fill="#4fd2f2"/><path d="M3 11h5v5H3zM9 11h5v5H9zM15 11h5v5h-5zM3 17h5v5H3zM9 17h5v5H9zM3 23h5v5H3zM9 23h5v5H9z" fill="#dfe6ea"/><path d="M15 17h5v11h-5z" fill="#14498c"/></svg></button>
    <button class="app running current" aria-label="AutoCAD"><svg width="30" height="30" viewBox="-7 -5 48 48"><path d="M-7-5h48v48H-7z" fill="#fbe9e6"/><path fill-rule="evenodd" d="M12 0h12l10 37h-9l-3-9h-9l-4 9H0zM17 9l-4 11h7z" fill="#b31f25"/></svg></button>
    <button class="app running" aria-label="录屏"><svg width="30" height="30"><use href="#rec-icon"/></svg></button>
  </div>
  <div class="tray">
    <button aria-label="录屏"><svg width="20" height="20"><use href="#rec-icon"/></svg></button>
    <button aria-label="安全卫士"><svg width="20" height="20"><path d="M10 0l9 3c0 9-2 14-9 17C3 17 1 12 1 3z" fill="#2474d8"/><path d="M10 0v20C3 17 1 12 1 3z" fill="#3f9df0"/><path d="M8 4h4v9h5v4H8z" fill="#fff"/></svg></button>
    <button aria-label="应用商店"><svg width="20" height="20"><path d="M2 2h15l2 16H1z" fill="#12c068"/><path d="M6 7c1 4 6 4 7 0" fill="none" stroke="#fff" stroke-width="1.500"/></svg></button>
  </div>
</div>
</body>
</html>
```

FILE: styles.css
```css
* { box-sizing: border-box; }

:root {
  --bg: #1f2630;
  --panel: #3b4450;
  --field: #4a5668;
  --text: #eceff1;
  --accent: #5b8ac0;
}

body {
  margin: 0;
  min-height: 100vh;
  display: flex;
  flex-direction: column;
  overflow: hidden;
  background: var(--bg);
  color: var(--text);
  font: 15px/20px "Open Sans", "Noto Sans CJK SC", sans-serif;
}

button, select, input {
  margin: 0;
  padding: 0;
  border: 0;
  background: none;
  color: inherit;
  font: inherit;
}

select { appearance: none; flex: 1; min-width: 0; }
svg { display: block; flex: none; }
.symbols { position: absolute; }
.ico { width: 20px; height: 20px; }
.bigico { width: 40px; height: 40px; }
.caret { width: 10px; height: 6px; }
.tiny { width: 7px; height: 4px; }
.dim { opacity: .6; }

/* Title bar and ribbon tabs */
.titlebar { display: flex; height: 53px; }
.app-menu { width: 55px; padding: 0 0 5px 7px; flex: none; }
.title-rows { flex: 1; min-width: 0; }
.title-row { display: flex; height: 31px; align-items: flex-start; }
.quick-access { display: flex; gap: 10px; padding: 3px 8px 0 4px; }
.with-caret { display: flex; align-items: center; gap: 8px; }
.workspace {
  display: flex;
  align-items: center;
  width: 221px;
  height: 26px;
  padding: 2px 1px 0 3px;
  background: var(--panel);
}
.customize { padding: 7px 0 0 5px; }
.title {
  flex: 1;
  display: flex;
  justify-content: center;
  gap: 17px;
  margin: 0;
  padding-top: 3px;
  font-size: 16px;
  font-weight: 400;
  white-space: nowrap;
}
.infocenter { display: flex; align-items: center; gap: 6px; padding-right: 51px; height: 25px; }
.search {
  width: 221px;
  height: 25px;
  margin: 0 0 0 2px;
  padding: 0 2px 2px;
  background: #434b5c;
  font-size: 14px;
  font-style: italic;
}
.search::placeholder { color: #a9b0b9; opacity: 1; }
.signin { display: flex; align-items: center; gap: 7px; }

.ribbon-tabs { display: flex; height: 22px; }
.ribbon-tabs button { padding: 0 12px 2px 11px; margin-right: 1px; color: #a9b0b6; white-space: nowrap; }
.ribbon-tabs .active { background: var(--panel); color: #fff; border-radius: 3px 3px 0 0; }
.ribbon-tabs .minimize { display: flex; align-items: center; gap: 6px; padding-left: 25px; }

/* Ribbon */
.ribbon { display: flex; height: 121px; padding-left: 1px; overflow: hidden; }
.panel {
  flex: none;
  display: flex;
  flex-direction: column;
  background: var(--panel);
  border-right: 1px solid var(--bg);
}
.panel-body { flex: 1; display: flex; align-items: flex-start; padding-top: 5px; }
.panel-title {
  display: flex;
  align-items: center;
  justify-content: center;
  gap: 7px;
  height: 22px;
  flex: 1 0 auto;
}
.panel > .panel-title { flex: none; }
.panel-foot { display: flex; height: 22px; }
.launcher { padding-right: 6px; }

.big {
  display: flex;
  flex-direction: column;
  align-items: center;
  width: 50px;
  padding-top: 2px;
  line-height: 20px;
  flex: none;
}
.big .bigico { margin-bottom: 5px; }
.big .tiny { margin-top: 4px; }
.big.wide { width: 54px; }

.rows { display: grid; grid-auto-rows: 29px; align-items: center; }
.cmd { display: flex; align-items: center; gap: 7px; height: 26px; white-space: nowrap; }
.cmd.split .tiny { margin-left: 6px; }

.p-draw { width: 260px; }
.p-draw .rows { padding-left: 6px; }
.p-draw .cmd.split .tiny { margin-left: 2px; }
.p-modify { width: 281px; }
.p-modify .rows { grid-template-columns: 73px 74px 92px 20px; padding-left: 7px; }
.p-annotate { width: 193px; padding-left: 6px; }
.p-annotate .panel-title { padding-right: 6px; }
.p-annotate .rows { padding-left: 5px; }
.p-annotate .cmd.split .tiny, .p-block .cmd.split .tiny { margin-left: 3px; }
.p-layer { width: 312px; }
.p-layer .rows { grid-template-columns: repeat(4, 30px) 138px; }
.p-layer .cmd { padding-left: 4px; }
.layer-combo { grid-column: 1 / -1; }
.p-block { width: 166px; }
.p-block .rows { padding-left: 4px; }
.p-props { width: 302px; }
.p-props .rows { grid-template-columns: 23px 223px; padding-left: 2px; }
.p-group { width: 86px; }
.p-group .rows { width: 28px; }
.p-group .cmd { padding-left: 5px; }

.combo {
  display: flex;
  align-items: center;
  gap: 4px;
  height: 27px;
  padding: 0 3px 0 4px;
  background: var(--field);
  border: 1px solid #262e39;
}
.combo .ico { height: 18px; }
.swatch { width: 18px; height: 18px; margin: 0 1px 0 2px; background: #fff; border: 1px solid #111; }
.swatch.large { width: 20px; height: 20px; margin: 0 7px 0 10px; border-color: #cfd4d8; }
.stroke { width: 79px; height: 1px; background: #fff; }
.combo.line { gap: 2px; }

.p-layer .cmd.pad { height: 25px; width: 96px; }
.pointed { position: relative; }
.pointer { position: absolute; left: 40px; top: 17px; width: 12px; height: 19px; }
.hover { background: #222a33; }
.on.cmd { background: #3f6c96; border: 1px solid #6fb3e6; }

/* Document tabs */
.doc-tabs {
  display: flex;
  align-items: flex-end;
  height: 37px;
  padding-left: 20px;
  border-bottom: 5px solid var(--panel);
}
.doc-tab {
  display: flex;
  align-items: center;
  justify-content: space-between;
  width: 155px;
  height: 27px;
  padding: 0 19px;
  background: #2d3641;
  color: #c3c9ce;
  clip-path: polygon(8px 0, 147px 0, 155px 100%, 0 100%);
}
.doc-tab.active { width: 160px; padding: 0 19px 0 16px; background: var(--panel); color: var(--text); clip-path: polygon(8px 0, 146px 0, 160px 100%, 0 100%); }
.add-tab {
  display: flex;
  align-items: center;
  justify-content: center;
  width: 26px;
  height: 17px;
  margin: 0 0 4px 5px;
  background: #2d3641;
  clip-path: polygon(0 0, 75% 0, 100% 100%, 20% 100%);
}

/* Drawing area */
.canvas { position: relative; flex: 1; min-height: 0; overflow: hidden; background: #000; }
.drawing { position: absolute; inset: 0; }
.note {
  position: absolute;
  margin: 0;
  color: #fff;
  font: 35px/42px "Liberation Sans", "Noto Sans CJK SC", sans-serif;
}
.formulas { left: 142px; top: 250px; }
.clipped { left: -34px; top: 356px; font-size: 46px; font-weight: 500; }

.console {
  position: absolute;
  left: 384px;
  right: 52px;
  bottom: 0;
  display: flex;
  flex-direction: column;
  align-items: flex-start;
}
.history {
  height: 19px;
  margin: 0 0 6px 76px;
  padding: 0 2px;
  border-radius: 2px;
  background: #555;
  font: 16px/18px "Noto Sans CJK SC", sans-serif;
  white-space: pre;
}
.history.old { background: #444; color: #b5b5b5; }
.history:nth-child(2) { margin-bottom: 4px; }
.history code { font: 15px/18px "DejaVu Sans Mono", monospace; }
.command-bar { display: flex; align-self: stretch; height: 32px; margin-bottom: 1px; }
.command-tools {
  display: flex;
  align-items: center;
  gap: 14px;
  width: 69px;
  padding-left: 9px;
  background: #191e26;
  border-radius: 3px 0 0 3px;
}
.grip { width: 1px; height: 24px; border-left: 1px dashed #c3c9ce; margin-right: -7px; }
.command-line {
  display: flex;
  flex: 1;
  align-items: center;
  gap: 2px;
  padding: 0 5px;
  background: rgba(255, 255, 255, .69);
  border-radius: 0 3px 3px 0;
}
.command-line input {
  flex: 1;
  min-width: 0;
  padding: 0 0 2px 7px;
  font: italic 16px/20px "Noto Sans CJK SC", sans-serif;
  color: #333;
}
.command-line input::placeholder { color: #555; opacity: 1; }

/* Status bar */
.statusbar {
  display: flex;
  justify-content: space-between;
  height: 35px;
  border-top: 1px solid #4c5560;
}
.layout-tabs { display: flex; padding-left: 14px; }
.layout-tabs button {
  height: 22px;
  padding: 0 12px 2px 13px;
  margin-right: 1px;
  background: #29323c;
  color: #b9bfc5;
  clip-path: polygon(0 0, 100% 0, calc(100% - 7px) 100%, 7px 100%);
}
.layout-tabs .active { background: #39434e; color: #fff; font-weight: 700; }
.layout-tabs .plus { padding: 0 9px; margin-left: 4px; }
.status-tools { display: flex; align-items: center; gap: 3px; width: 352px; overflow: hidden; }
.status-tools button { height: 31px; background: #3a4350; }
.status-tools .model { width: 35px; padding: 0 0 0 4px; white-space: nowrap; font-weight: 500; }
.tool-group { display: flex; align-items: center; background: #3a4350; }
.tool-group.spaced { gap: 2px; }
.status-tools .tool { display: flex; align-items: center; justify-content: center; width: 28px; flex: none; }
.status-tools .tool.on { height: 28px; background: var(--accent); }
.status-tools .drop { width: 21px; padding-left: 5px; }
.status-tools .tool.wide { width: 31px; }

/* Taskbar */
.taskbar {
  display: flex;
  justify-content: space-between;
  height: 50px;
  background: linear-gradient(90deg, #34434d 0, #38454c 17%, #3e4444 32%, #434440 44%, #48453a 48%, #434440 51%, #3c4343 56%, #3e4241 68%, #2f4048 74%, #2f3f47 85%, #364241 100%);
}
.apps, .tray { display: flex; }
.apps button { display: flex; align-items: center; justify-content: center; width: 60px; }
.apps .find { margin-right: 3px; }
.apps .running { background: linear-gradient(#76b9ed, #76b9ed) center bottom / 49px 2px no-repeat; }
.apps .current { background: linear-gradient(#76b9ed, #76b9ed) center bottom / 100% 2px no-repeat, #646a6b; }
.tray { gap: 20px; padding-right: 3px; }
```
